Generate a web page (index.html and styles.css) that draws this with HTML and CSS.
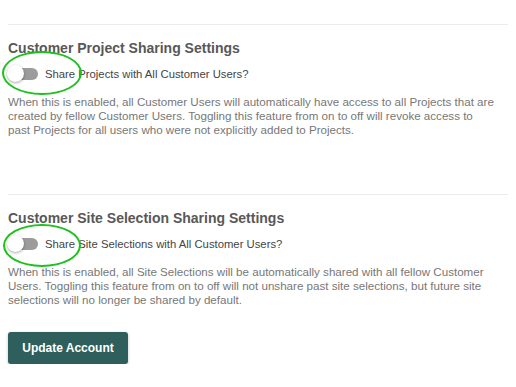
FILE: index.html
```html
<!DOCTYPE html>
<html lang="en">
<head>
    <meta charset="UTF-8">
    <meta name="viewport" content="width=device-width, initial-scale=1.0">
    <title>Account Sharing Settings</title>
    <link rel="stylesheet" href="styles.css">
</head>
<body>
    <div class="page">
        <div class="section">
            <h3>Customer Project Sharing Settings</h3>
            <div class="toggle-row">
                <span class="switch"><span class="knob"></span></span>
                <span class="toggle-label">Share Projects with All Customer Users?</span>
                <span class="mark"></span>
            </div>
            <p class="help">When this is enabled, all Customer Users will automatically have access to all Projects that are created by fellow Customer Users. Toggling this feature from on to off will revoke access to past Projects for all users who were not explicitly added to Projects.</p>
        </div>

        <div class="section">
            <h3>Customer Site Selection Sharing Settings</h3>
            <div class="toggle-row">
                <span class="switch"><span class="knob"></span></span>
                <span class="toggle-label">Share Site Selections with All Customer Users?</span>
                <span class="mark mark-second"></span>
            </div>
            <p class="help">When this is enabled, all Site Selections will be automatically shared with all fellow Customer Users. Toggling this feature from on to off will not unshare past site selections, but future site selections will no longer be shared by default.</p>
        </div>

        <button class="btn-update">Update Account</button>
    </div>
</body>
</html>
```

FILE: styles.css
```css
body {
    margin: 0;
    padding: 0 8px;
    background-color: #fff;
    font-family: "Liberation Sans", Arial, sans-serif;
}
.page {
    padding-top: 24px;
}
.section {
    border-top: 1px solid #ebebeb;
    margin-bottom: 57px;
}
.section:last-of-type {
    margin-bottom: 0;
}
h3 {
    margin: 14px 0 0 0;
    font-size: 14px;
    line-height: 18px;
    font-weight: bold;
    color: #585858;
}
.toggle-row {
    position: relative;
    display: flex;
    align-items: center;
    height: 20px;
    margin-top: 7px;
}
.switch {
    position: relative;
    width: 30px;
    height: 12px;
    border-radius: 6px;
    background-color: #9c9c9c;
}
.knob {
    position: absolute;
    left: -1px;
    top: -3px;
    width: 17px;
    height: 17px;
    border-radius: 50%;
    background-color: #fff;
    box-shadow: 0 1px 3px rgba(0, 0, 0, 0.35);
}
.toggle-label {
    margin-left: 7px;
    font-size: 11.3px;
    color: #444;
}
.mark {
    position: absolute;
    left: -6px;
    top: -13px;
    width: 76px;
    height: 40px;
    border: 2px solid #1fc11f;
    border-radius: 50%;
    pointer-events: none;
}
.mark-second {
    left: -5px;
    top: -10px;
    width: 74px;
    height: 39px;
}
.help {
    margin: 11px 0 0 0;
    max-width: 488px;
    font-size: 11.6px;
    line-height: 14px;
    color: #777;
}
.btn-update {
    margin-top: 25px;
    width: 120px;
    height: 32px;
    border: none;
    border-radius: 3px;
    background-color: #2e5f5c;
    color: #fff;
    font-family: "Liberation Sans", Arial, sans-serif;
    font-size: 12px;
    font-weight: bold;
    box-shadow: 0 1px 3px rgba(0, 0, 0, 0.25);
    cursor: pointer;
}
```
